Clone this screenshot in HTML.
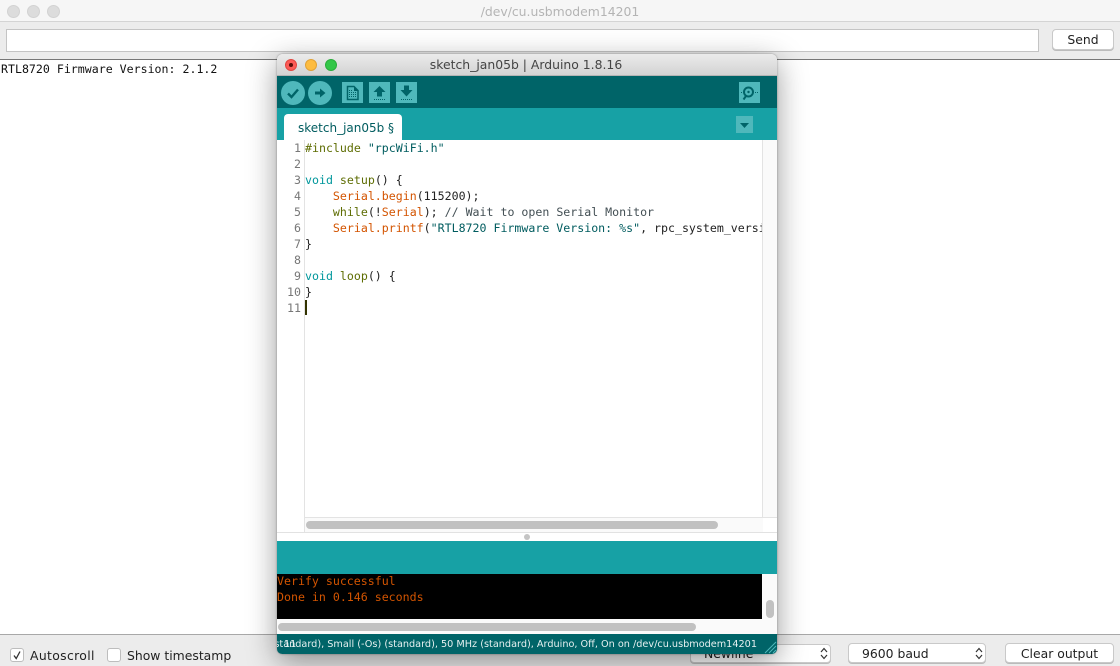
<!DOCTYPE html>
<html><head><meta charset="utf-8"><style>
html,body{margin:0;padding:0}
body{width:1120px;height:666px;position:relative;overflow:hidden;background:#fff;font-family:"DejaVu Sans","Liberation Sans",sans-serif}
div,svg{position:absolute;box-sizing:border-box}
.m{font-family:"DejaVu Sans Mono","Liberation Mono",monospace;font-size:11.6px;white-space:pre;line-height:16px}
.ln{left:277px;width:24px;text-align:right;color:#777}
.or{color:#d35400}.ol{color:#5e6d03}.te{color:#00979c}.st{color:#005c5f}.gr{color:#434f54}
.btn{background:#fff;border:1px solid #c9c9c9;border-radius:4px;font-size:12.4px;color:#222;text-align:center;box-shadow:0 1px 0 #bbb}
.sq{background:#4fb8bb;width:21px;height:21px;top:82px}
</style></head><body>
<!-- serial monitor -->
<div style="left:0;top:0;width:1120px;height:22px;background:#f6f6f6;border-bottom:1px solid #d4d4d4"></div>
<div style="left:7px;top:5px;width:13px;height:13px;border-radius:50%;background:#dcdcdc;border:1px solid #d2d2d2"></div>
<div style="left:27px;top:5px;width:13px;height:13px;border-radius:50%;background:#dcdcdc;border:1px solid #d2d2d2"></div>
<div style="left:47px;top:5px;width:13px;height:13px;border-radius:50%;background:#dcdcdc;border:1px solid #d2d2d2"></div>
<div style="left:0;top:4px;width:1120px;text-align:center;font-size:12.4px;line-height:15px;color:#b4b4b4">/dev/cu.usbmodem14201</div>
<div style="left:0;top:22px;width:1120px;height:38px;background:#ececec;border-bottom:1px solid #777"></div>
<div style="left:6px;top:29px;width:1033px;height:23px;background:#fff;border:1px solid #c4c4c4"></div>
<div class="btn" style="left:1052px;top:29px;width:62px;height:21px;line-height:19px">Send</div>
<div class="m" style="left:1px;top:61px;color:#111">RTL8720 Firmware Version: 2.1.2</div>
<div style="left:0;top:634px;width:1120px;height:32px;background:#ececec;border-top:1px solid #a8a8a8"></div>
<div style="left:10px;top:648px;width:14px;height:14px;background:#fff;border:1px solid #bdbdbd;border-radius:3px"></div>
<svg style="left:10px;top:648px" width="14" height="14"><path d="M4 7.500 L6.200 10.500 L10 3.500" fill="none" stroke="#333" stroke-width="1.300"/></svg>
<div style="left:30px;top:648px;font-size:12.4px;line-height:16px;color:#222;white-space:nowrap;letter-spacing:.35px">Autoscroll</div>
<div style="left:107px;top:648px;width:14px;height:14px;background:#fff;border:1px solid #bdbdbd;border-radius:3px"></div>
<div style="left:127px;top:648px;font-size:12.4px;line-height:16px;color:#222;white-space:nowrap">Show timestamp</div>
<div class="btn" style="left:690px;top:644px;width:141px;height:19px;line-height:18px;text-align:left;padding-left:13px">Newline</div>
<svg style="left:819px;top:646px" width="10" height="15"><path d="M2 6 L5 2.500 L8 6 M2 9 L5 12.500 L8 9" fill="none" stroke="#333" stroke-width="1.200"/></svg>
<div class="btn" style="left:848px;top:643px;width:138px;height:20px;line-height:19px;text-align:left;padding-left:13px">9600 baud</div>
<svg style="left:974px;top:646px" width="10" height="15"><path d="M2 6 L5 2.500 L8 6 M2 9 L5 12.500 L8 9" fill="none" stroke="#333" stroke-width="1.200"/></svg>
<div class="btn" style="left:1005px;top:643px;width:109px;height:20px;line-height:19px">Clear output</div>

<!-- arduino window -->
<div style="left:277px;top:54px;width:500px;height:600px;border-radius:6px;box-shadow:0 8px 30px rgba(0,0,0,.4),0 0 2px rgba(0,0,0,.35);background:#fff"></div>
<div style="left:277px;top:54px;width:500px;height:22px;border-radius:6px 6px 0 0;background:linear-gradient(#ebebeb,#d3d3d3);border-bottom:1px solid #b4b4b4"></div>
<div style="left:285px;top:59px;width:12px;height:12px;border-radius:50%;background:#fc5b57;border:1px solid #e2463f"></div>
<div style="left:289px;top:63px;width:4px;height:4px;border-radius:50%;background:#5a0d08"></div>
<div style="left:305px;top:59px;width:12px;height:12px;border-radius:50%;background:#fdbc40;border:1px solid #e1a235"></div>
<div style="left:325px;top:59px;width:12px;height:12px;border-radius:50%;background:#33c748;border:1px solid #2aad3b"></div>
<div style="left:277px;top:57px;width:498px;text-align:center;font-size:12.4px;line-height:16px;color:#444;white-space:nowrap">sketch_jan05b | Arduino 1.8.16</div>

<div style="left:277px;top:76px;width:500px;height:32px;background:#006468"></div>
<svg style="left:281px;top:81px" width="140" height="24">
<circle cx="12" cy="12" r="12" fill="#4fb8bb"/><circle cx="39" cy="12" r="12" fill="#4fb8bb"/>
<path d="M7 12.500 L10.500 16 L17 8.500" fill="none" stroke="#006468" stroke-width="2.400"/>
<path d="M34 10.500 H39 V7.500 L44.500 12 L39 16.500 V13.500 H34 Z" fill="#006468"/>
</svg>
<div class="sq" style="left:342px"></div><div class="sq" style="left:369px"></div><div class="sq" style="left:396px"></div>
<svg style="left:342px;top:82px" width="75" height="21">
<path d="M5.500 4.500 H12 L16 8.500 V17.500 H5.500 Z" fill="#4fb8bb" stroke="#006468" stroke-width="1.500"/>
<path d="M12 4 V9 H16.500 Z" fill="#006468"/>
<path d="M7 8.500 H11 M7 10.500 H15 M7 12.500 H15 M7 14.500 H15" stroke="#006468" stroke-width="1" stroke-dasharray="1 1"/>
<path d="M37.500 4 L43.500 10 H40 V14.500 H35 V10 H31.500 Z" fill="#006468"/>
<path d="M32 17.500 H44" stroke="#006468" stroke-width="1" stroke-dasharray="1 1"/>
<path d="M62 3.500 H67 V8 H70.500 L64.500 14.500 L58.500 8 H62 Z" fill="#006468"/>
<path d="M59 17.500 H71" stroke="#006468" stroke-width="1" stroke-dasharray="1 1"/>
</svg>
<div class="sq" style="left:739px"></div>
<svg style="left:739px;top:82px" width="21" height="21">
<circle cx="9.500" cy="10" r="4.500" fill="none" stroke="#006468" stroke-width="2"/>
<circle cx="9.500" cy="10" r="1.200" fill="#006468"/>
<path d="M7 14 L4.500 17.500" stroke="#006468" stroke-width="2"/>
<path d="M2 10.500 H4 M16 10.500 H20" stroke="#006468" stroke-width="1" stroke-dasharray="1 1"/>
</svg>

<div style="left:277px;top:108px;width:500px;height:32px;background:#17a1a5"></div>
<div style="left:284px;top:114px;width:118px;height:26px;background:#fff;border-radius:4px 4px 0 0"></div>
<div style="left:298px;top:120px;font-size:12px;line-height:16px;color:#005c5f;white-space:nowrap">sketch_jan05b §</div>
<div style="left:736px;top:116px;width:17px;height:17px;background:#4fb8bb"></div>
<svg style="left:736px;top:116px" width="17" height="17"><path d="M4 7 H13 L8.500 12 Z" fill="#006468"/></svg>

<!-- editor -->
<div style="left:277px;top:140px;width:500px;height:392px;background:#fff"></div>
<div style="left:304px;top:140px;width:1px;height:392px;background:#e3e3e3"></div>
<div style="left:762px;top:140px;width:15px;height:392px;background:#fafafa;border-left:1px solid #e3e3e3"></div>
<div style="left:305px;top:517px;width:472px;height:15px;background:#fafafa;border-top:1px solid #e3e3e3"></div>
<div style="left:763px;top:518px;width:14px;height:14px;background:#fff"></div>
<div style="left:306px;top:521px;width:412px;height:8px;border-radius:4px;background:#c1c1c1"></div>
<div style="left:277px;top:532px;width:500px;height:1px;background:#e2e2e2"></div>
<div style="left:524px;top:534px;width:6px;height:6px;border-radius:50%;background:#c4c4c4"></div>

<div class="m ln" style="top:140px">1</div><div class="m ln" style="top:156px">2</div><div class="m ln" style="top:172px">3</div><div class="m ln" style="top:188px">4</div><div class="m ln" style="top:204px">5</div><div class="m ln" style="top:220px">6</div><div class="m ln" style="top:236px">7</div><div class="m ln" style="top:252px">8</div><div class="m ln" style="top:268px">9</div><div class="m ln" style="top:284px">10</div><div class="m ln" style="top:300px">11</div>
<div style="left:305px;top:140px;width:457px;height:180px;overflow:hidden;color:#222">
<div class="m" style="left:0;top:0;color:#5e6d03">#include <span class="st">"rpcWiFi.h"</span></div>
<div class="m" style="left:0;top:32px"><span class="te">void</span> <span class="ol">setup</span>() {</div>
<div class="m" style="left:0;top:48px">    <span class="or">Serial.begin</span>(115200);</div>
<div class="m" style="left:0;top:64px">    <span class="ol">while</span>(!<span class="or">Serial</span>); <span class="gr">// Wait to open Serial Monitor</span></div>
<div class="m" style="left:0;top:80px">    <span class="or">Serial.printf</span>(<span class="st">"RTL8720 Firmware Version: %s"</span>, rpc_system_version());</div>
<div class="m" style="left:0;top:96px">}</div>
<div class="m" style="left:0;top:128px"><span class="te">void</span> <span class="ol">loop</span>() {</div>
<div class="m" style="left:0;top:144px">}</div>
</div>
<div style="left:305px;top:300px;width:2px;height:15px;background:#333300"></div>

<!-- console -->
<div style="left:277px;top:541px;width:500px;height:33px;background:#17a1a5"></div>
<div style="left:277px;top:574px;width:485px;height:45px;background:#000"></div>
<div class="m" style="left:277px;top:573px;color:#d35400">Verify successful</div>
<div class="m" style="left:277px;top:589px;color:#d35400">Done in 0.146 seconds</div>
<div style="left:762px;top:574px;width:15px;height:45px;background:#fafafa"></div>
<div style="left:766px;top:600px;width:8px;height:18px;border-radius:4px;background:#c1c1c1"></div>
<div style="left:277px;top:619px;width:500px;height:15px;background:#fafafa"></div>
<div style="left:278px;top:623px;width:418px;height:8px;border-radius:4px;background:#c1c1c1"></div>

<!-- status -->
<div style="left:277px;top:634px;width:500px;height:20px;background:#006468;border-radius:0 0 5px 5px;overflow:hidden"></div>
<div style="left:277px;top:637px;width:480px;height:15px;overflow:hidden"><div style="right:0;top:0;font-size:9.7px;line-height:15px;color:#e6f0f0;white-space:nowrap">(standard), Small (-Os) (standard), 50 MHz (standard), Arduino, Off, On on /dev/cu.usbmodem14201</div></div>
<div style="left:284px;top:637px;font-size:9.7px;line-height:15px;color:#e6f0f0">11</div>
<svg style="left:763px;top:640px" width="14" height="14"><path d="M13 2 L2 13 M13 6 L6 13 M13 10 L10 13" stroke="#4fb8bb" stroke-width="1"/></svg>
</body></html>
